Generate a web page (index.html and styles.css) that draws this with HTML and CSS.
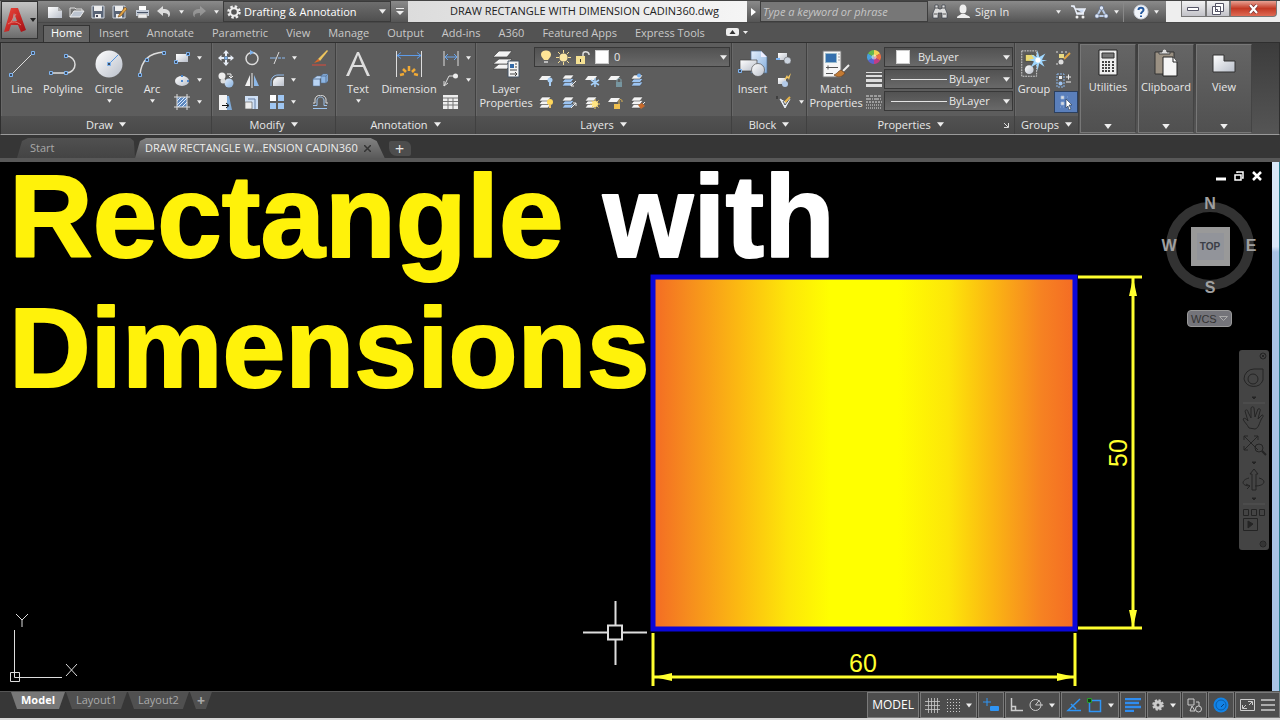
FILE: index.html
```
<!DOCTYPE html>
<html lang="en">
<head>
  <meta charset="UTF-8">
  <meta name="viewport" content="width=device-width, initial-scale=1.0">
  <title>DRAW RECTANGLE WITH DIMENSION CADIN360.dwg</title>
  <link rel="stylesheet" href="styles.css">
</head>
<body>
  <!-- Shared shapes and gradients -->
  <svg class="defs" width="0" height="0" aria-hidden="true">
    <defs>
      <linearGradient id="metal" x1="0" y1="0" x2="1" y2="1"><stop offset="0" stop-color="#fff"/><stop offset="1" stop-color="#b9bfca"/></linearGradient>
      <linearGradient id="blue" x1="0" y1="0" x2="1" y2="1"><stop offset="0" stop-color="#e4effc"/><stop offset="1" stop-color="#84aedd"/></linearGradient>
      <linearGradient id="red" x1="0" y1="0" x2="1" y2="1"><stop offset="0" stop-color="#f0483c"/><stop offset="1" stop-color="#a30f14"/></linearGradient>
    </defs>
    <symbol id="caret" viewBox="0 0 6 4"><path d="M0 0h6L3 4z" fill="#eee"/></symbol>
    <symbol id="node" viewBox="0 0 4 4"><path d="M.5.5h3v3h-3z" fill="#3d4c60" stroke="#7fb4f0"/></symbol>
    <symbol id="sheets" viewBox="0 0 16 14"><g fill="#f4f4f4" stroke="#444" stroke-width=".6"><path d="M4 9h9l-3 4H1z"/><path d="M4 5.500h9l-3 4H1z"/><path d="M4 2h9l-3 4H1z"/></g></symbol>
    <symbol id="sheets-blue" viewBox="0 0 16 14"><g stroke="#444" stroke-width=".6"><path d="M4 9h9l-3 4H1z" fill="#9cc4f2"/><path d="M4 5.500h9l-3 4H1z" fill="#9cc4f2"/><path d="M4 2h9l-3 4H1z" fill="#f4f4f4"/></g></symbol>
    <symbol id="sheet" viewBox="0 0 16 14"><path d="M4 3h9l-3 4H1z" fill="#f4f4f4"/></symbol>
  </svg>

  <div class="app">
    <header class="titlebar">
      <button class="app-button" aria-label="Application menu">
        <svg width="24" height="27" viewBox="0 0 24 27"><path d="M1 25 8 1h7l8 22-5 2-3-7H8l-2 6zM9 14h5l-3-8z" fill="url(#red)"/><path d="M5 17c5-3 8-3 13 1M8 15l5-8" fill="none" stroke="#e77a72"/></svg>
        <svg width="6" height="4" viewBox="0 0 6 4"><path d="M0 0h6L3 4z" fill="#222"/></svg>
      </button>
      <div class="quick-access">
        <button aria-label="New"><svg width="16" height="14" viewBox="0 0 16 14"><path d="M1 2h10l4 4v7H1z" fill="url(#metal)"/><path d="M11 2v4h4" fill="#aaa"/></svg></button>
        <button aria-label="Open"><svg width="16" height="14" viewBox="0 0 16 14"><path d="M1 12V3h5l1 1h6v3" fill="none" stroke="#ddd"/><path d="m1 12 4-6h10l-4 6z" fill="#bcc4d0" stroke="#eee"/></svg></button>
        <button aria-label="Save"><svg width="14" height="14" viewBox="0 0 14 14"><path d="M1 1h12v12H1z" fill="#596476" stroke="#cbd2dc"/><path d="M3 1h8v5H3zM4 9h6v4H4z" fill="#eee"/><path d="M5 10h2v2H5z" fill="#445"/></svg></button>
        <button aria-label="Save As"><svg width="16" height="14" viewBox="0 0 16 14"><path d="M1 1h12v12H1z" fill="#596476" stroke="#cbd2dc"/><path d="M3 1h8v5H3zM4 9h6v4H4z" fill="#eee"/><path d="m7 10 6-8 2 2-6 7-3 1z" fill="#e1a548" stroke="#6e4516" stroke-width=".6"/></svg></button>
        <button aria-label="Plot"><svg width="15" height="14" viewBox="0 0 15 14"><path d="M4 1h7v5H4z" fill="#fff"/><path d="M1 5h13v6H1z" fill="#c4ccd8"/><path d="M2 7h11v1H2z" fill="#495468"/><path d="M3 9h9v4H3z" fill="#eee" stroke="#888" stroke-width=".5"/></svg></button>
        <button aria-label="Undo"><svg width="14" height="12" viewBox="0 0 14 12"><path d="M0 5 6 0v3c5 0 7 2 7 5 0 2-1 3-2 3 1-3-1-4-5-4v3z" fill="#ddd"/></svg></button>
        <button aria-label="Undo list" class="drop"><svg width="5" height="4"><use href="#caret"/></svg></button>
        <button aria-label="Redo" class="faded"><svg width="14" height="12" viewBox="0 0 14 12"><path d="M14 5 8 0v3C3 3 1 5 1 8c0 2 1 3 2 3-1-3 1-4 5-4v3z" fill="#bbb"/></svg></button>
        <button aria-label="Redo list" class="drop"><svg width="5" height="4"><use href="#caret"/></svg></button>
      </div>
      <label class="workspace">
        <svg width="14" height="14" viewBox="0 0 14 14"><circle cx="7" cy="7" r="5.500" fill="none" stroke="#eee" stroke-width="2.500" stroke-dasharray="2.400 1.920"/><circle cx="7" cy="7" r="3.800" fill="#555" stroke="#eee" stroke-width="2"/></svg>
        <select aria-label="Workspace"><option>Drafting &amp; Annotation</option></select>
        <svg width="7" height="5"><use href="#caret"/></svg>
      </label>
      <button class="customize" aria-label="Customize toolbar"><svg width="8" height="8" viewBox="0 0 8 8"><path d="M0 0h8v1H0zM0 3h8L4 7z" fill="#eee"/></svg></button>
      <h1 class="document-title">DRAW RECTANGLE WITH DIMENSION CADIN360.dwg</h1>
      <button class="search-toggle" aria-label="Toggle search"><svg width="5" height="8" viewBox="0 0 5 8"><path d="m0 0 5 4-5 4z" fill="#fff"/></svg></button>
      <input class="search" type="text" aria-label="Search" placeholder="Type a keyword or phrase">
      <div class="account">
        <button aria-label="Find"><svg width="16" height="15" viewBox="0 0 16 15"><path d="M3 1h3v3l1 1h2l1-1V1h3v3l2 5v5h-5V9H6v5H1V9l2-5z" fill="#ddd" stroke="#3b414b" stroke-width=".7"/><path d="M2 10h3M11 10h3M3 4h3M10 4h3" stroke="#555"/></svg></button>
        <button class="sign-in"><svg width="15" height="15" viewBox="0 0 15 15"><ellipse cx="7" cy="5" rx="3.500" ry="4.500" fill="#eee"/><path d="M1 14c0-3 3-2 4-4h4c1 2 5 1 5 4z" fill="#eee"/></svg>Sign In</button>
        <button aria-label="Account list" class="push"><svg width="5" height="4"><use href="#caret"/></svg></button>
        <button aria-label="Exchange"><svg width="15" height="14" viewBox="0 0 15 14"><path d="M0 1h3l3 8h7M4 4h10l-2 4H6" fill="#cbd9f0" stroke="#e9eef8" stroke-width="1.500"/><circle cx="6" cy="12" r="1.500" fill="#eee"/><circle cx="12" cy="12" r="1.500" fill="#eee"/></svg></button>
        <button aria-label="Stay connected"><svg width="15" height="14" viewBox="0 0 15 14"><path d="M7.500 3 3 11h9z" fill="none" stroke="#b9cbe6" stroke-width="2"/><g fill="#dce6f7" stroke="#445470" stroke-width=".6"><circle cx="7.500" cy="3" r="2.200"/><circle cx="3" cy="11" r="2.200"/><circle cx="12" cy="11" r="2.200"/></g></svg><svg width="5" height="4"><use href="#caret"/></svg></button>
        <button aria-label="Help" class="help"><svg width="16" height="16" viewBox="0 0 16 16"><circle cx="8" cy="8" r="7" fill="#f2f5fa" stroke="#cfd4dd"/><path d="M5.500 6c0-3 5-3 5 0 0 2-2.500 1.500-2.500 4M8 11.500v1.500" fill="none" stroke="#24599f" stroke-width="2"/></svg><svg width="5" height="4"><use href="#caret"/></svg></button>
      </div>
      <div class="window-buttons">
        <button aria-label="Minimize"><svg width="12" height="6" viewBox="0 0 12 6"><path d="M.5 1.500h11v3H.5z" fill="#fff" stroke="#556"/></svg></button>
        <button aria-label="Restore"><svg width="12" height="12" viewBox="0 0 12 12"><path d="M3.500.5h8v8h-8zM.5 3.500h8v8h-8zM3.500 6.500h2v2h-2z" fill="#fff" stroke="#556"/></svg></button>
        <button class="close" aria-label="Close"><svg width="11" height="10" viewBox="0 0 11 10"><path d="m2 1 7 8M9 1 2 9" stroke="#733" stroke-width="3.500"/><path d="m2 1 7 8M9 1 2 9" stroke="#fff" stroke-width="2.200"/></svg></button>
      </div>
    </header>

    <nav class="ribbon-tabs">
      <a class="active" href="#home">Home</a>
      <a href="#insert">Insert</a>
      <a href="#annotate">Annotate</a>
      <a href="#parametric">Parametric</a>
      <a href="#view">View</a>
      <a href="#manage">Manage</a>
      <a href="#output">Output</a>
      <a href="#addins">Add-ins</a>
      <a href="#a360">A360</a>
      <a href="#featured">Featured Apps</a>
      <a href="#express">Express Tools</a>
      <button class="ribbon-toggle" aria-label="Minimize ribbon"><svg width="22" height="8" viewBox="0 0 22 8"><rect width="13" height="8" rx="2" fill="#eee"/><path d="M3.500 6h6l-3-4z" fill="#333"/><path d="M17 3h5l-2.500 3z" fill="#eee"/></svg></button>
    </nav>

    <main class="ribbon">
      <section class="panel draw">
        <div class="tools">
          <button class="big w40"><svg width="28" height="28" viewBox="0 0 28 28"><path d="M3 25 25 3" stroke="#ddd"/><use href="#node" x="1" y="23" width="4" height="4"/><use href="#node" x="23" y="1" width="4" height="4"/></svg>Line</button>
          <button class="big w42"><svg width="30" height="28" viewBox="0 0 30 28"><path d="M3 23h15c12 0 12-17 0-17" fill="none" stroke="#ddd" stroke-width="1.500"/><use href="#node" x="1" y="21" width="4" height="4"/><use href="#node" x="16" y="21" width="4" height="4"/><use href="#node" x="16" y="4" width="4" height="4"/></svg>Polyline</button>
          <button class="big w50"><svg width="28" height="28" viewBox="0 0 28 28"><circle cx="14" cy="14" r="13.500" fill="url(#metal)"/><path d="m14 14 9-9" stroke="#5595de"/><use href="#node" x="12" y="12" width="4" height="4"/></svg>Circle<svg class="down" width="5" height="4"><use href="#caret"/></svg></button>
          <button class="big w36"><svg width="30" height="28" viewBox="0 0 30 28"><path d="M3 25C4 10 12 3 27 2" fill="none" stroke="#ddd" stroke-width="1.500"/><use href="#node" x="1" y="23" width="4" height="4"/><use href="#node" x="8" y="8" width="4" height="4"/><use href="#node" x="25" y="1" width="4" height="4"/></svg>Arc<svg class="down" width="5" height="4"><use href="#caret"/></svg></button>
          <div class="stack">
            <button aria-label="Rectangle"><svg width="16" height="14" viewBox="0 0 16 14"><path d="M2 3h12v8H2z" fill="url(#metal)"/><use href="#node" x="0" y="9" width="4" height="4"/><use href="#node" x="12" y="1" width="4" height="4"/></svg><svg width="5" height="4"><use href="#caret"/></svg></button>
            <button aria-label="Ellipse"><svg width="16" height="14" viewBox="0 0 16 14"><ellipse cx="8" cy="8" rx="7" ry="5" fill="url(#metal)"/><path d="M7 2h2v2H7zM13 7h2v2h-2zM7 7h2v2H7z" fill="#4b86cc"/></svg><svg width="5" height="4"><use href="#caret"/></svg></button>
            <button aria-label="Hatch"><svg width="16" height="16" viewBox="0 0 16 16"><path d="M3 3h10v10H3z" fill="#5c87bd"/><path d="m3 7 4-4M3 11l8-8M4 13l9-9M8 13l5-5" stroke="#dceaff"/><path d="M3 0v16M13 0v16M0 3h16M0 13h16" stroke="#ddd"/></svg><svg width="5" height="4"><use href="#caret"/></svg></button>
          </div>
        </div>
        <h2>Draw <svg width="7" height="5"><use href="#caret"/></svg></h2>
      </section>

      <section class="panel modify">
        <div class="tools modify-grid">
          <button aria-label="Move"><svg width="16" height="16" viewBox="0 0 16 16"><path d="m8 0 3 3.500H9V6H7V3.500H5zM8 16l-3-3.500h2V10h2v2.500h2zM0 8l3.500-3v2H6v2H3.500v2zM16 8l-3.500 3V9H10V7h2.500V5z" fill="#e8eef6"/><path d="M6.500 6.500h3v3h-3z" fill="#7fb4f0"/></svg></button>
          <button aria-label="Rotate"><svg width="16" height="16" viewBox="0 0 16 16"><circle cx="8" cy="8.500" r="6" fill="none" stroke="#ddd" stroke-width="1.500"/><path d="m6 0 4 2.500L6 5z" fill="#7fb4f0"/></svg></button>
          <button aria-label="Trim"><svg width="16" height="14" viewBox="0 0 16 14"><path d="M0 7h6m2 0h3m1 0h3" stroke="#8dbbf0"/><path d="m4 13 5-12" stroke="#ddd"/></svg><svg width="5" height="4"><use href="#caret"/></svg></button>
          <button aria-label="Erase"><svg width="16" height="16" viewBox="0 0 16 16"><path d="m15 0-9 9 2 2 8-10z" fill="#edc55e"/><path d="m6 9-4 4 3-1 3-1z" fill="#e16823"/><path d="M0 15h14" stroke="#df4b3a"/></svg></button>
          <button aria-label="Copy"><svg width="16" height="16" viewBox="0 0 16 16"><circle cx="4" cy="4" r="3.500" fill="#eee"/><circle cx="11" cy="11" r="4.500" fill="url(#blue)"/><circle cx="5" cy="9" r="2.500" fill="#ddd"/><path d="M9 2h4v4M11 4l2 2 2-2" fill="none" stroke="#eee"/></svg></button>
          <button aria-label="Mirror"><svg width="16" height="15" viewBox="0 0 16 15"><path d="M6 2v11H1z" fill="#f0f0f0"/><path d="M10 2v11h5z" fill="#8db8e8"/><path d="M8 0v15" stroke="#eee"/></svg></button>
          <button aria-label="Fillet"><svg width="15" height="14" viewBox="0 0 15 14"><path d="M3 13V9c0-3 3-5 6-5h5v9z" fill="url(#metal)"/><path d="M1 13V9c0-4 3-7 7-7h6" fill="none" stroke="#95bff0"/></svg><svg width="5" height="4"><use href="#caret"/></svg></button>
          <button aria-label="Explode"><svg width="16" height="14" viewBox="0 0 16 14"><path d="m1 6 4-3h6L8 6zM1 6h7v7H1z" fill="#b9d4f3" stroke="#526e90" stroke-width=".5"/><path d="m9 3 2-2h5l-2 2zM9 3h5v7H9zM14 3l2-2v7l-2 2z" fill="#8db5e2" stroke="#526e90" stroke-width=".5"/></svg></button>
          <button aria-label="Stretch"><svg width="15" height="15" viewBox="0 0 15 15"><path d="M8 1h3l3 14H8z" fill="#7fabd9"/><path d="M1 0h8v15H1z" fill="#f2f2f2"/><path d="M4 10.500h6M8 8l3 2.500L8 13" fill="none" stroke="#111"/></svg></button>
          <button aria-label="Scale"><svg width="15" height="15" viewBox="0 0 15 15"><path d="M1 1h13v13H1z" fill="#cfe0f5"/><path d="M4 4h7v10" fill="none" stroke="#647fa5"/><path d="M1 7h7v7H1z" fill="#eee" stroke="#666" stroke-width=".7"/></svg></button>
          <button aria-label="Array"><svg width="15" height="15" viewBox="0 0 15 15"><path d="M0 0h6v6H0z" fill="#fff"/><path d="M8 0h6v6H8zM0 8h6v6H0zM8 8h6v6H8z" fill="#9fc6f2"/></svg><svg width="5" height="4"><use href="#caret"/></svg></button>
          <button aria-label="Offset"><svg width="16" height="15" viewBox="0 0 16 15"><path d="M1 13.500h14M1 10.500h4V5c1-4 6-4 7 0v5.500h3" fill="none" stroke="#9dc4ef"/><path d="M1 8h2V4c1-5 10-5 11 0v4h2" fill="none" stroke="#ddd"/></svg></button>
        </div>
        <h2>Modify <svg width="7" height="5"><use href="#caret"/></svg></h2>
      </section>

      <section class="panel annotation">
        <div class="tools">
          <button class="big w42"><svg width="26" height="28" viewBox="0 0 26 28"><path d="M1 26 12 2h2l11 24h-3l-4-9H8l-4 9zM9 15h8l-4-10z" fill="#ddd"/></svg>Text<svg class="down" width="5" height="4"><use href="#caret"/></svg></button>
          <button class="big w60"><svg width="28" height="28" viewBox="0 0 28 28"><path d="M1.500 1v26M26.500 1v26" stroke="#ddd"/><path d="M2 5.500h24M6 2.500 2 5.500l4 3M22 2.500l4 3-4 3" fill="none" stroke="#5d9be8"/><path d="m5 25 4-1m-1-5 3 3m3-6v5m6-2-3 3m6 3-4-1" stroke="#f1aa35" stroke-width="2.500"/></svg>Dimension</button>
          <div class="stack">
            <button aria-label="Linear"><svg width="16" height="15" viewBox="0 0 16 15"><path d="M1 0v15M15 0v15" stroke="#ddd"/><path d="M2 6h12M5 3 2 6l3 3M11 3l3 3-3 3" fill="none" stroke="#6ba6ee"/></svg><svg width="5" height="4"><use href="#caret"/></svg></button>
            <button aria-label="Leader"><svg width="16" height="14" viewBox="0 0 16 14"><path d="M1 13 6 3h6M1 8v5l4-3" fill="none" stroke="#ddd"/><circle cx="12.500" cy="3" r="2.500" fill="#eee"/></svg><svg width="5" height="4"><use href="#caret"/></svg></button>
            <button aria-label="Table"><svg width="15" height="14" viewBox="0 0 15 14"><path d="M0 0h15v14H0z" fill="#eee"/><path d="M0 3h15M0 6.500h15M0 10h15M5 3v11M10 3v11" stroke="#777"/></svg></button>
          </div>
        </div>
        <h2>Annotation <svg width="7" height="5"><use href="#caret"/></svg></h2>
      </section>

      <section class="panel layers">
        <div class="tools">
          <button class="big w56"><svg width="28" height="28" viewBox="0 0 28 28"><g fill="#f4f4f4" stroke="#444" stroke-width=".7"><path d="M7 14h13l-5 5H1z"/><path d="M7 9h13l-5 5H1z"/><path d="M7 1h13l-5 6H1z"/></g><path d="M16 11h11v16H16z" fill="#f4f4f4" stroke="#456"/><path d="M18 14h4v4h-4z" fill="#336aa8"/><path d="M23 14h2M23 17h2M18 20h7M18 24h7m-2-2 2 2-2 2" fill="none" stroke="#444"/></svg>Layer<br>Properties</button>
          <div class="layer-tools">
            <label class="combo">
              <svg width="10" height="14" viewBox="0 0 10 14"><path d="M3 10C2 8 0 7 0 4.500 0-1 10-1 10 4.500 10 7 8 8 7 10z" fill="#ffe596"/><path d="M3 11h4v2H3z" fill="#bbb"/></svg>
              <svg width="15" height="15" viewBox="0 0 15 15"><circle cx="7.500" cy="7.500" r="4" fill="#fae6a3"/><path d="M7.500 0v3m0 9v3M0 7.500h3m9 0h3M2 2l2 2m7 7 2 2m0-11-2 2m-7 7-2 2" stroke="#f4dd95"/></svg>
              <svg width="14" height="13" viewBox="0 0 14 13"><path d="M7 6V3c0-3 5-3 6 0v1" fill="none" stroke="#ddd" stroke-width="1.500"/><path d="M0 5h9v8H0z" fill="#f5e193"/><path d="M4 8h1v3H4z" fill="#333"/></svg>
              <span class="swatch"></span>
              <select aria-label="Layer"><option>0</option></select>
              <svg width="7" height="5"><use href="#caret"/></svg>
            </label>
            <div class="layer-grid">
              <button aria-label="Off"><svg width="16" height="14" viewBox="0 0 16 14"><use href="#sheet" width="16" height="14"/><circle cx="12" cy="7" r="2.500" fill="#a9cff5"/><path d="M12 8v5" stroke="#a9cff5" stroke-width="2"/></svg></button>
              <button aria-label="Isolate"><svg width="16" height="14" viewBox="0 0 16 14"><use href="#sheets-blue" width="16" height="14"/><path d="m15 8-5 5m0-3v3h3" fill="none" stroke="#eee"/></svg></button>
              <button aria-label="Freeze"><svg width="16" height="14" viewBox="0 0 16 14"><use href="#sheet" width="16" height="14"/><path d="M11 5v9M7 7l8 5M7 12l8-5" stroke="#a4cff9" stroke-width="1.500"/></svg></button>
              <button aria-label="Lock"><svg width="16" height="14" viewBox="0 0 16 14"><use href="#sheet" width="16" height="14"/><path d="M10 9V7c0-2 4-2 4 0v2" fill="none" stroke="#85a8b2"/><path d="M9 9h6v5H9z" fill="#7796a0"/></svg></button>
              <button aria-label="Make Current"><svg width="16" height="14" viewBox="0 0 16 14"><use href="#sheets-blue" width="16" height="14"/><circle cx="9" cy="2.500" r="2" fill="#79b4f5"/></svg></button>
              <button aria-label="Turn All On"><svg width="16" height="14" viewBox="0 0 16 14"><use href="#sheets" width="16" height="14"/><circle cx="12" cy="7" r="3" fill="#ffd75b"/><path d="M12 9v4" stroke="#eac066" stroke-width="2"/></svg></button>
              <button aria-label="Unisolate"><svg width="16" height="14" viewBox="0 0 16 14"><use href="#sheets-blue" width="16" height="14"/><path d="m10 13 5-5m-3 0h3v3" fill="none" stroke="#eee"/></svg></button>
              <button aria-label="Thaw All"><svg width="16" height="14" viewBox="0 0 16 14"><use href="#sheets" width="16" height="14"/><path d="M11 4v10M6 9h10M7.500 5.500l7 7m0-7-7 7" stroke="#f6cf63"/><circle cx="11" cy="9" r="3" fill="#ffe582"/></svg></button>
              <button aria-label="Unlock"><svg width="16" height="14" viewBox="0 0 16 14"><use href="#sheet" width="16" height="14"/><path d="M12 9V6c0-2 3-2 3 0v1" fill="none" stroke="#e0b753"/><path d="M7 9h6v5H7z" fill="#efc04e"/></svg></button>
              <button aria-label="Match Layer"><svg width="16" height="14" viewBox="0 0 16 14"><use href="#sheets" width="16" height="14"/><path d="m8 10 4-2 3 3-4 3z" fill="#c76a2b"/><path d="m13 9 2-2" stroke="#eee"/></svg></button>
            </div>
          </div>
        </div>
        <h2>Layers <svg width="7" height="5"><use href="#caret"/></svg></h2>
      </section>

      <section class="panel block">
        <div class="tools">
          <button class="big w40"><svg width="30" height="28" viewBox="0 0 30 28"><path d="M13 1h10l6 6v16H13z" fill="url(#blue)" stroke="#526f91" stroke-width=".7"/><path d="M23 1v6h6" fill="#eef"/><path d="M2 10h17v11H2z" fill="url(#metal)" stroke="#444" stroke-width=".7"/><circle cx="20" cy="20" r="6.500" fill="url(#metal)" stroke="#555" stroke-width=".7"/><use href="#node" x="0" y="19" width="4" height="4"/></svg>Insert</button>
          <div class="stack">
            <button aria-label="Create Block"><svg width="16" height="14" viewBox="0 0 16 14"><path d="M2 2h9v7H2z" fill="url(#metal)"/><circle cx="11.500" cy="9.500" r="3.500" fill="#ccd4df" stroke="#555" stroke-width=".5"/><path d="M0 8h4" stroke="#7fb4f0" stroke-width="2"/></svg></button>
            <button aria-label="Edit Block"><svg width="16" height="14" viewBox="0 0 16 14"><path d="M2 5h8v6H2z" fill="url(#metal)"/><circle cx="9" cy="11" r="3" fill="#b3cae8"/><path d="m8 7 3-5 1 2 3-4-2 7-1-2z" fill="#f4c85f"/></svg></button>
            <button aria-label="Edit Attributes"><svg width="16" height="14" viewBox="0 0 16 14"><path d="m4 4 5 9 5-9-5 3z" fill="#e8eef6" stroke="#e8eef6"/><path d="m7 6 2 4 5-7" fill="none" stroke="#555"/><path d="m9 7 5-5" stroke="#e6b44a" stroke-width="2"/><path d="M1 1v3" stroke="#222"/></svg><svg width="5" height="4"><use href="#caret"/></svg></button>
          </div>
        </div>
        <h2>Block <svg width="7" height="5"><use href="#caret"/></svg></h2>
      </section>

      <section class="panel properties">
        <div class="tools">
          <button class="big w56"><svg width="28" height="28" viewBox="0 0 28 28"><path d="M1 1h18v26H1z" fill="#f6f6f6" stroke="#777"/><path d="M3.500 3.500h11v9h-11z" fill="#346fad" stroke="#9bc"/><path d="M16.500 4h1m-1 3h1m-1 3h1M4 17.500h12m-10-2v4M4 23.500h7" stroke="#555"/><path d="m27 15-6 6" stroke="#eee" stroke-width="2"/><path d="M12 25c3-1 4-4 7-5l4 3c-2 4-7 5-11 2z" fill="#c27a34" stroke="#69401f" stroke-width=".7"/></svg>Match<br>Properties</button>
          <div class="property-icons">
            <svg width="14" height="14" viewBox="0 0 14 14"><path d="M7 7V0a7 7 0 0 1 6 3.500z" fill="#f5d254"/><path d="m7 7 6-3.500a7 7 0 0 1 0 7z" fill="#ed6f45"/><path d="m7 7 6 3.500A7 7 0 0 1 7 14z" fill="#c13d86"/><path d="M7 7v7a7 7 0 0 1-6-3.500z" fill="#5a63cd"/><path d="M7 7 1 10.500a7 7 0 0 1 0-7z" fill="#47a1de"/><path d="M7 7 1 3.500A7 7 0 0 1 7 0z" fill="#66b84c"/><circle cx="7" cy="7" r="2.500" fill="#fff" opacity=".5"/></svg>
            <svg width="16" height="16" viewBox="0 0 16 16"><path d="M0 .5h16" stroke="#ddd"/><path d="M0 4h16" stroke="#ddd" stroke-width="2"/><path d="M0 8.500h16" stroke="#ddd" stroke-width="3"/><path d="M0 13.500h16" stroke="#ddd" stroke-width="3"/></svg>
            <svg width="16" height="14" viewBox="0 0 16 14"><path d="M0 1h16" stroke="#ddd" stroke-dasharray="3 1"/><path d="M0 4h16" stroke="#ddd" stroke-dasharray="5 1 1 1"/><path d="M0 7h16" stroke="#ddd" stroke-dasharray="2 1"/><path d="M0 10h16M0 13h16" stroke="#ddd" stroke-dasharray="1 1"/></svg>
          </div>
          <div class="property-combos">
            <label class="combo"><span class="swatch"></span><select aria-label="Object color"><option>ByLayer</option></select><svg width="7" height="5"><use href="#caret"/></svg></label>
            <label class="combo"><span class="stroke"></span><select aria-label="Lineweight"><option>ByLayer</option></select><svg width="7" height="5"><use href="#caret"/></svg></label>
            <label class="combo"><span class="stroke"></span><select aria-label="Linetype"><option>ByLayer</option></select><svg width="7" height="5"><use href="#caret"/></svg></label>
          </div>
        </div>
        <h2>Properties <svg width="7" height="5"><use href="#caret"/></svg>
          <button class="launcher" aria-label="Open properties palette"><svg width="5" height="5" viewBox="0 0 5 5"><path d="m0 0 4 4M4.500 0v4.500H0" fill="none" stroke="#ddd"/></svg></button></h2>
      </section>

      <section class="panel groups">
        <div class="tools">
          <button class="big w36"><svg width="30" height="32" viewBox="0 0 30 32"><path d="M1 1h17v29H1z" fill="none" stroke="#ddd" stroke-dasharray="2 1"/><path d="M5 5h11v8H5z" fill="#e8d873" stroke="#444"/><circle cx="9.500" cy="22.500" r="5" fill="url(#metal)"/><path d="m19 0 2 8 7-4-4 7 6 1-6 1 3 6-6-4-2 9-1-8-7 4 4-7-6-2 6-1-3-5 6 3z" fill="#9fd7ff"/><circle cx="19.500" cy="11.500" r="3" fill="#fff"/></svg>Group</button>
          <div class="stack">
            <button aria-label="Ungroup"><svg width="16" height="15" viewBox="0 0 16 15"><path d="M3 3h5v4H3z" fill="#e9da83"/><circle cx="5" cy="11" r="2.500" fill="#ddd"/><path d="M1 0v2m4-1h2m3-1v2M1 12v2" stroke="#ddd"/><path d="m8 8 6-6" stroke="#dfa344" stroke-width="2"/></svg></button>
            <button aria-label="Group Edit"><svg width="16" height="15" viewBox="0 0 16 15"><path d="M1 1h7v13H1z" fill="none" stroke="#8bb8ec" stroke-dasharray="2 1"/><path d="M3 3h3v3H3z" fill="#eee"/><circle cx="4.500" cy="10.500" r="2" fill="#9fc4f0"/><path d="M10 4h5M12.500 1.500v5M10 9h5" stroke="#eee"/></svg></button>
            <button class="selected" aria-label="Group Selection"><svg width="14" height="15" viewBox="0 0 14 15"><path d="M2 1h3v3H2zM2 7h3v3H2zM1 12h1m2 0h1M8 2h1" fill="#ddd" stroke="#9bb8e0" stroke-width=".7"/><path d="m7 4 6 6H10l2 4-2 1-1-4-2 2z" fill="#fff" stroke="#234" stroke-width=".6"/></svg></button>
          </div>
        </div>
        <h2>Groups <svg width="7" height="5"><use href="#caret"/></svg></h2>
      </section>

      <button class="collapsed"><svg width="28" height="28" viewBox="0 0 28 28"><path d="M5 1h18v25H5z" fill="#eee" stroke="#222"/><path d="M8 4h12v5H8z" fill="#777" stroke="#333"/><path d="M8 12h2v2H8zm3 0h2v2h-2zm3 0h2v2h-2zm4 0h2v2h-2zM8 15h2v2H8zm3 0h2v2h-2zm3 0h2v2h-2zm4 0h2v2h-2zM8 18h2v2H8zm3 0h2v2h-2zm3 0h2v2h-2zm4 0h2v2h-2zM8 21h2v2H8zm3 0h2v2h-2zm3 0h2v2h-2zm4 0h2v2h-2z" fill="#444"/></svg>Utilities<svg class="bottom" width="8" height="5"><use href="#caret"/></svg></button>
      <button class="collapsed"><svg width="28" height="28" viewBox="0 0 28 28"><path d="M3 3h19v22H3z" fill="#9b9183" stroke="#333"/><path d="M7 5V3h3c0-4 5-4 5 0h3v2z" fill="#ddd" stroke="#444"/><path d="M11 8h10l4 5v14H11z" fill="#f5f5f5" stroke="#222"/><path d="M21 8v5h4" fill="#fff" stroke="#222"/></svg>Clipboard<svg class="bottom" width="8" height="5"><use href="#caret"/></svg></button>
      <button class="collapsed"><svg width="28" height="28" viewBox="0 0 28 28"><path d="M3 6h11v6h11v11H3z" fill="url(#metal)" stroke="#333"/></svg>View<svg class="bottom" width="8" height="5"><use href="#caret"/></svg></button>
    </main>

    <nav class="file-tabs">
      <a class="start" href="#start">Start</a>
      <a class="current" href="#drawing">DRAW RECTANGLE W...ENSION CADIN360 <svg width="7" height="7" viewBox="0 0 7 7"><path d="m0 0 7 7M7 0 0 7" stroke="#333" stroke-width="1.500"/></svg></a>
      <button class="new-tab" aria-label="New drawing">+</button>
    </nav>

    <div class="workarea">
      <div class="canvas">
        <svg class="drawing" viewBox="0 162 1272 529" preserveAspectRatio="xMinYMin meet">
          <defs>
            <linearGradient id="fill">
              <stop offset="0" stop-color="#f46b24"/><stop offset=".08" stop-color="#f68b1e"/><stop offset=".2" stop-color="#fbb812"/>
              <stop offset=".32" stop-color="#fde609"/><stop offset=".42" stop-color="#ff0"/><stop offset=".58" stop-color="#ff0"/>
              <stop offset=".7" stop-color="#fde609"/><stop offset=".8" stop-color="#fbb812"/><stop offset=".92" stop-color="#f68222"/><stop offset="1" stop-color="#f46b24"/>
            </linearGradient>
          </defs>
          <g class="headline">
            <text class="first" x="9" y="257">Rectangle</text>
            <text class="first white" x="603" y="257">with</text>
            <text x="9" y="387">Dimensions</text>
          </g>
          <rect x="653" y="277" width="422" height="352" fill="url(#fill)" stroke="#0b07d8" stroke-width="5"/>
          <g class="dimension">
            <path d="M1078 277h64M1078 628h64M1133 278v350M653 633v53M1075 633v53M654 677h421"/>
            <path class="arrow" d="m1133 278 4 18h-8zM1133 628l4-18h-8zM654 677l18-4v8zM1075 677l-18-4v8z"/>
            <text x="863" y="672">60</text>
            <text transform="translate(1127 453) rotate(-90)">50</text>
          </g>
          <path class="cursor" d="M583 632.500h25m14 0h25M615.500 601v25m0 14v25M608 625.500h14v14h-14z"/>
          <path class="ucs" d="M14.500 630v47.500H62M10.500 672.500h9v9h-9zM16 614l6 6 6-6m-6 6v7M66 664l11 12m0-12-11 12"/>
        </svg>

        <div class="view-buttons">
          <button aria-label="Minimize view"><svg width="10" height="10" viewBox="0 0 10 10"><path d="M0 8h10" stroke="#fff" stroke-width="3"/></svg></button>
          <button aria-label="Restore view"><svg width="10" height="10" viewBox="0 0 10 10"><path d="M3 2V1h6v6H8M1 4h6v5H1z" fill="none" stroke="#fff" stroke-width="1.500"/></svg></button>
          <button aria-label="Close view"><svg width="10" height="10" viewBox="0 0 10 10"><path d="m1 1 8 8M9 1 1 9" stroke="#fff" stroke-width="2.500"/></svg></button>
        </div>

        <div class="view-cube">
          <span class="north">N</span>
          <span class="west">W</span>
          <button class="top-face">TOP</button>
          <span class="east">E</span>
          <span class="south">S</span>
        </div>
        <button class="wcs">WCS <svg width="9" height="5" viewBox="0 0 9 5"><path d="M.5.5h8l-4 4z" fill="none" stroke="#aaa"/></svg></button>

        <div class="nav-bar">
          <svg width="30" height="200" viewBox="0 0 30 200" fill="none" stroke="#242424">
            <circle cx="24" cy="6" r="3"/><path d="m22.500 4.500 3 3m0-3-3 3"/>
            <path d="M5 29a10 10 0 0 1 10-10h9v11a10 10 0 0 1-19-1z"/><circle cx="14" cy="29" r="5"/>
            <path d="M13 47h4l-2 2z" fill="#242424"/><path d="M4 53h22" stroke="#555"/>
            <path d="M10 78c-2-4-5-6-6-9 2-2 4 1 5 2L6 61c1-2 3-1 3 1l3 6V58c1-2 3-1 3 0l1 9 3-8c2-1 3 1 2 2l-2 8 4-4c2 0 1 2 0 3-3 5-3 10-7 11z"/>
            <path d="m5 86 14 14M19 86 5 100M5 90v-4h4m6 0h4v4M5 96v4h4" /><circle cx="20" cy="98" r="4"/><path d="m23 101 4 4" stroke-width="2"/>
            <path d="M13 112h4l-2 2z" fill="#242424"/>
            <path d="M13 140v-16h-2l4-5 4 5h-2v16zM10 128c-8 2-8 8 1 8M20 128c8 2 6 8-4 8M7 134l4 2-3 3"/>
            <path d="M13 148h4l-2 2z" fill="#242424"/><path d="M4 154h22" stroke="#555"/>
            <path d="M4.500 159.500h5v6h-5zM12.500 159.500h5v6h-5zM20.500 159.500h5v6h-5zM4.500 168.500h14v12h-14z"/><path d="m9 171 5 3-5 4z" fill="#242424"/>
            <circle cx="24" cy="194" r="3"/><path d="M22 193h4m-4 2h4"/>
          </svg>
        </div>
      </div>
      <div class="scroll-edge"></div>
    </div>

    <footer class="statusbar">
      <nav class="layout-tabs">
        <a class="active" href="#model">Model</a>
        <a href="#layout1">Layout1</a>
        <a href="#layout2">Layout2</a>
        <button aria-label="New layout">+</button>
      </nav>
      <div class="status-tools">
        <div class="cell"><button class="model">MODEL</button></div>
        <div class="cell">
          <button aria-label="Grid"><svg width="15" height="15" viewBox="0 0 15 15"><path d="M3.500 0v15M6.500 0v15M9.500 0v15M12.500 0v15M0 3.500h15M0 7.500h15M0 11.500h15" stroke="#ccc" stroke-width=".8"/></svg></button>
          <button aria-label="Snap"><svg width="14" height="14" viewBox="0 0 14 14"><path d="M1 1.500h13M1 4.500h13M1 7.500h13M1 10.500h13M1 13.500h13" stroke="#ccc" stroke-dasharray="1 2"/></svg></button>
          <button aria-label="Snap options"><svg width="6" height="5"><use href="#caret"/></svg></button>
        </div>
        <div class="cell"><button aria-label="Dynamic input"><svg width="16" height="14" viewBox="0 0 16 14"><path d="M4 0v8M0 4h8" stroke="#2f95f5"/><rect x="7" y="8" width="9" height="5" rx="1" fill="#2f95f5"/></svg></button></div>
        <div class="cell">
          <button aria-label="Ortho"><svg width="13" height="14" viewBox="0 0 13 14"><path d="M1.500 0v12.500H13M2 8.500h3.500v4" fill="none" stroke="#ccc" stroke-width="1.500"/></svg></button>
          <button aria-label="Polar"><svg width="14" height="14" viewBox="0 0 14 14"><circle cx="6.500" cy="7" r="5.500" fill="none" stroke="#ccc"/><path d="m6.500 7 4-5M6.500 7H14" stroke="#ccc"/></svg></button>
          <button aria-label="Polar options"><svg width="6" height="5"><use href="#caret"/></svg></button>
        </div>
        <div class="cell">
          <button aria-label="Tracking"><svg width="15" height="14" viewBox="0 0 15 14"><path d="M14 1 2 12.500h13M5 6l5 5" fill="none" stroke="#2f95f5" stroke-width="1.500"/></svg></button>
          <button aria-label="Object snap"><svg width="15" height="15" viewBox="0 0 15 15"><path d="M2.500 2.500h11v11h-11z" fill="none" stroke="#2f95f5" stroke-width="1.500"/><path d="M.5.5h4v4h-4z" fill="#163d18" stroke="#2b9c2d"/></svg></button>
          <button aria-label="Snap modes"><svg width="6" height="5"><use href="#caret"/></svg></button>
        </div>
        <div class="cell"><button aria-label="Lineweight display"><svg width="16" height="14" viewBox="0 0 16 14"><path d="M0 1h16M0 5h14M0 9h16M0 13h9" stroke="#2f8df0" stroke-width="2.500"/></svg></button></div>
        <div class="cell">
          <button aria-label="Settings"><svg width="12" height="12" viewBox="0 0 12 12"><circle cx="6" cy="6" r="4.800" fill="none" stroke="#ccc" stroke-width="2" stroke-dasharray="2.200 1.570"/><circle cx="6" cy="6" r="3" fill="none" stroke="#ccc" stroke-width="3"/></svg></button>
          <button aria-label="Settings options"><svg width="6" height="5"><use href="#caret"/></svg></button>
        </div>
        <div class="cell"><button aria-label="Isolate objects"><svg width="15" height="15" viewBox="0 0 15 15"><path d="M1 1h6v6H1zM5 8l3 5H3zM9 4h3v4" fill="none" stroke="#ccc"/><circle cx="11.500" cy="11" r="3" fill="none" stroke="#ccc"/></svg></button></div>
        <div class="cell"><button aria-label="Hardware acceleration"><svg width="16" height="16" viewBox="0 0 16 16"><circle cx="8" cy="8" r="7.500" fill="#1283e6"/><circle cx="8" cy="8" r="5" fill="none" stroke="#0b5da8"/><path d="m8 10 3-3" stroke="#063f78"/></svg></button></div>
        <div class="cell">
          <button aria-label="Clean screen"><svg width="15" height="12" viewBox="0 0 15 12"><path d="M.5.5h14v11H.5z" fill="none" stroke="#ccc"/><path d="M8 2.500h4.500V6M7 9.500H2.500V6M12 3 9 6M3 9l3-3" fill="none" stroke="#ccc"/></svg></button>
          <button aria-label="Customization"><svg width="14" height="12" viewBox="0 0 14 12"><path d="M0 1h14M0 6h14M0 11h14" stroke="#ccc" stroke-width="1.500"/></svg></button>
        </div>
      </div>
    </footer>
  </div>
</body>
</html>
```
FILE: styles.css
```
* {
  box-sizing: border-box;
}
body {
  margin: 0;
  font-family: "Open Sans", "Noto Sans", sans-serif;
  font-size: 11px;
  line-height: 14px;
  color: #e8e8e8;
  background: #000;
}
button, input, select {
  font: inherit;
  color: inherit;
  margin: 0;
  padding: 0;
  border: 0;
  background: none;
}
select {
  appearance: none;
  flex: 1;
  min-width: 0;
}
a {
  color: inherit;
  text-decoration: none;
}
svg {
  display: block;
  flex: none;
}
.defs {
  position: absolute;
}
.app {
  display: flex;
  flex-direction: column;
  height: 100vh;
  overflow: hidden;
}

/* title bar */
.titlebar {
  position: relative;
  display: flex;
  height: 22px;
  flex: none;
  padding-left: 39px;
  background: linear-gradient(#8a8a8a, #555);
  border-top: 1px solid #444;
}
.titlebar button {
  display: flex;
  align-items: center;
  justify-content: center;
}
.titlebar .app-button {
  position: absolute;
  left: 1px;
  top: 0;
  width: 37px;
  height: 38px;
  gap: 3px;
  background: linear-gradient(#c5c5c5, #6c6c6c);
  border: 1px solid #333;
  z-index: 2;
}
.quick-access {
  display: flex;
  width: 184px;
  padding-left: 5px;
}
.quick-access button {
  width: 23px;
}
.quick-access .drop {
  width: 14px;
}
.quick-access .faded {
  opacity: 0.5;
}
.workspace {
  display: flex;
  align-items: center;
  gap: 3px;
  width: 168px;
  padding: 0 4px 0 3px;
  color: #fff;
  background: linear-gradient(#6d6d6d, #505050);
  border: 1px solid #3a3a3a;
}
.customize {
  width: 17px;
}
.document-title {
  flex: 1;
  margin: 0;
  padding-left: 14px;
  font-size: 11px;
  font-weight: normal;
  line-height: 20px;
  text-align: center;
  color: #222;
  white-space: nowrap;
  background: linear-gradient(90deg, #dcdcdc, #f5f5f5);
}
.search-toggle {
  width: 13px;
}
.search {
  width: 168px;
  padding: 0 2px;
  font-style: italic;
  background: #777;
  border: 1px solid #3d3d3d;
}
.search::placeholder {
  color: #c6c6c6;
  opacity: 1;
}
.account {
  display: flex;
  width: 238px;
  padding: 0 3px 0 0;
}
.account button {
  gap: 5px;
  padding: 0 4px;
}
.account .sign-in {
  gap: 4px;
}
.account .push {
  margin-left: auto;
  padding-right: 6px;
}
.account .help {
  padding-left: 9px;
  border-left: 1px solid #888;
}
.window-buttons {
  display: flex;
  width: 114px;
  padding: 0 3px 5px 15px;
  background: #eee;
}
.window-buttons button {
  flex: 1;
  background: linear-gradient(#f3f3f3, #c2c2c8);
  border: 1px solid #777;
  border-top: 0;
}
.window-buttons .close {
  flex: 2;
  background: linear-gradient(#e9a294, #c33a25 50%, #df6a54);
  border-radius: 0 0 4px 0;
}

/* ribbon tabs */
.ribbon-tabs {
  display: flex;
  align-items: flex-end;
  flex: none;
  height: 20px;
  padding-left: 43px;
  color: #c9c9c9;
  background: #535353;
  border-top: 1px solid #484848;
}
.ribbon-tabs a {
  height: 17px;
  padding: 0 9px;
  line-height: 15px;
}
.ribbon-tabs .active {
  color: #fff;
  background: #656565;
  border: 1px solid #333;
  border-bottom: 0;
  line-height: 14px;
  padding: 0 7px;
}
.ribbon-toggle {
  padding: 0 0 6px 12px;
}

/* ribbon */
.ribbon {
  display: flex;
  flex: none;
  height: 93px;
  background: linear-gradient(#3c3c3c, #555);
  border: 1px solid #2f2f2f;
  border-bottom: 1px solid #9a9a9a;
}
.panel {
  display: flex;
  flex-direction: column;
  flex: none;
  background: #5d5d5d;
  border-right: 1px solid #404040;
  box-shadow: inset 1px 0 #686868;
}
.panel h2 {
  display: flex;
  position: relative;
  align-items: center;
  justify-content: center;
  gap: 6px;
  height: 18px;
  padding-bottom: 1px;
  margin: 0;
  font-size: 11px;
  font-weight: normal;
  background: linear-gradient(#525252, #494949);
}
.draw { width: 211px; }
.modify { width: 124px; }
.annotation { width: 140px; }
.layers { width: 256px; }
.block { width: 75px; }
.properties { width: 208px; }
.groups { width: 64px; }

.tools {
  display: flex;
  flex: 1;
  padding: 4px 0 0 1px;
}
.tools button {
  display: flex;
  align-items: center;
}
.tools .big {
  flex-direction: column;
  padding-top: 3px;
}
.big > svg:first-child {
  height: 28px;
  margin-bottom: 4px;
  overflow: visible;
}
.down {
  margin-top: 3px;
}
.w36 { width: 36px; }
.w40 { width: 40px; }
.w42 { width: 42px; }
.w50 { width: 50px; }
.w56 { width: 56px; }
.w60 { width: 60px; }
.stack {
  display: flex;
  flex-direction: column;
  padding-left: 2px;
}
.stack button {
  height: 22px;
  gap: 7px;
  padding: 0 2px;
}
.stack .selected {
  padding: 0 4px;
  background: #5a7fbb;
  border: 1px solid #2c405f;
}
.modify-grid {
  display: grid;
  grid-template-columns: 26px 26px 42px 20px;
  grid-auto-rows: 22px;
  padding-left: 6px;
}
.modify-grid button {
  gap: 6px;
}
.layers .tools {
  padding-left: 2px;
}
.layer-tools {
  display: flex;
  flex-direction: column;
  width: 196px;
  gap: 2px;
}
.layer-grid {
  display: grid;
  grid-template-columns: repeat(5, 23px);
  grid-auto-rows: 22px;
  padding-left: 4px;
}
.combo {
  display: flex;
  align-items: center;
  gap: 6px;
  height: 20px;
  padding: 0 2px 0 6px;
  background: linear-gradient(#525252, #696969);
  border: 1px solid #383838;
}
.layer-tools .combo {
  gap: 5px;
}
.swatch {
  width: 14px;
  height: 14px;
  background: #fff;
  border: 1px solid #ccc;
}
.stroke {
  width: 56px;
  height: 1px;
  background: #e4e4e4;
}
.property-icons {
  display: flex;
  flex-direction: column;
  align-items: center;
  justify-content: space-between;
  width: 20px;
  padding: 3px 0 7px;
}
.property-combos {
  display: flex;
  flex-direction: column;
  width: 129px;
  gap: 2px;
}
.property-combos .swatch {
  margin: 0 2px 0 5px;
}
.property-combos .stroke + select {
  margin-left: -4px;
}
.launcher {
  position: absolute;
  right: 5px;
  bottom: 6px;
}
.collapsed {
  display: flex;
  flex-direction: column;
  align-items: center;
  width: 56px;
  margin: 1px;
  padding: 4px 0 3px;
  background: linear-gradient(#656565, #505050);
  border: 1px solid #777;
  border-right-color: #444;
}
.collapsed > svg:first-child {
  margin-bottom: 3px;
}
.collapsed .bottom {
  margin-top: auto;
}

/* drawing tabs */
.file-tabs {
  display: flex;
  align-items: flex-end;
  flex: none;
  height: 27px;
  padding-left: 17px;
  background: #363636;
  border-bottom: 4px solid #585858;
}
.file-tabs a {
  display: flex;
  align-items: center;
  height: 20px;
  background: linear-gradient(#505050, #444);
}
.file-tabs .start {
  width: 118px;
  padding-left: 13px;
  color: #a9a9a9;
  clip-path: polygon(0 100%, 5px 15%, 11px 0, 96% 0, 99% 15%, 100% 100%);
}
.file-tabs .current {
  gap: 6px;
  padding: 0 14px 0 10px;
  color: #eee;
  background: linear-gradient(#828282, #5a5a5a);
  clip-path: polygon(0 100%, 5px 15%, 11px 0, calc(100% - 14px) 0, calc(100% - 8px) 15%, 100% 100%);
}
.new-tab {
  width: 22px;
  height: 15px;
  margin: 0 0 2px 4px;
  font-size: 16px;
  line-height: 14px;
  background: #4d4d4d;
  border-radius: 2px 6px 2px 8px;
}

/* model space */
.workarea {
  display: flex;
  flex: 1;
  min-height: 0;
}
.canvas {
  position: relative;
  flex: 1;
  min-width: 0;
}
.drawing {
  width: 100%;
  height: 100%;
  overflow: visible;
}
.headline {
  font-family: "Liberation Sans", Arial, sans-serif;
  font-size: 113px;
  font-weight: bold;
  fill: #fff20a;
  stroke: #fff20a;
  stroke-width: 2px;
  stroke-linejoin: round;
}
.first {
  font-size: 116px;
}
.white {
  fill: #fff;
  stroke: #fff;
}
.dimension {
  font-family: "Liberation Sans", Arial, sans-serif;
  font-size: 25px;
  fill: #ffff2e;
  text-anchor: middle;
}
.dimension path {
  fill: none;
  stroke: #ffff2e;
  stroke-width: 3px;
}
.dimension .arrow {
  fill: #ffff2e;
  stroke: none;
}
.cursor, .ucs {
  fill: none;
  stroke: #ddd;
}
.cursor {
  stroke-width: 2px;
}
.view-buttons {
  position: absolute;
  top: 9px;
  right: 10px;
  display: flex;
  gap: 8px;
}
.view-cube {
  position: absolute;
  top: 34px;
  right: 10px;
  display: grid;
  grid-template-columns: 22px 60px 22px;
  grid-template-rows: 16px 68px 16px;
  place-items: center;
  font: bold 16px "Liberation Sans", Arial, sans-serif;
  color: #a0a0a0;
}
.view-cube::before {
  content: "";
  position: absolute;
  inset: 6px 8px;
  border: 10px solid #323232;
  border-radius: 50%;
}
.view-cube > * {
  position: relative;
}
.north, .south {
  grid-column: 1 / 4;
}
.top-face {
  width: 39px;
  height: 39px;
  font-size: 10px;
  font-weight: bold;
  color: #3b3e46;
  background: #92949a;
  border: 6px solid #999;
}
.wcs {
  position: absolute;
  top: 148px;
  right: 40px;
  display: flex;
  align-items: center;
  justify-content: space-between;
  width: 45px;
  height: 17px;
  padding: 0 3px;
  font-family: "Liberation Sans", Arial, sans-serif;
  color: #333;
  background: #74747a;
  border: 1px solid #999;
  border-radius: 4px;
}
.nav-bar {
  position: absolute;
  top: 188px;
  right: 3px;
  background: #444;
  border-radius: 3px;
}
.scroll-edge {
  width: 8px;
  background: linear-gradient(#d8e7f7 16%, #a9c4e6 17%);
  border-right: 1px solid #287d8c;
}

/* status bar */
.statusbar {
  display: flex;
  justify-content: space-between;
  flex: none;
  height: 29px;
  background: #373737;
  border-top: 1px solid #555;
  border-bottom: 2px solid #d8d8d8;
}
.layout-tabs {
  display: flex;
  height: 17px;
  padding-left: 11px;
  line-height: 16px;
}
.layout-tabs a, .layout-tabs button {
  padding: 0 10px;
  margin-right: 1px;
  color: #aaa;
  background: #505050;
  clip-path: polygon(0 0, 100% 0, calc(100% - 6px) 100%, 6px 100%);
}
.layout-tabs .active {
  font-weight: bold;
  color: #fff;
  background: #777;
}
.layout-tabs button {
  padding: 0 7px;
  font-size: 14px;
  font-weight: bold;
}
.status-tools {
  display: flex;
  gap: 1px;
}
.cell {
  display: flex;
  align-items: center;
  gap: 6px;
  padding: 0 4px;
  background: #4d4d4d;
  border: 1px solid #7a7a7a;
}
.model {
  font-size: 12px;
  color: #fff;
}
```
